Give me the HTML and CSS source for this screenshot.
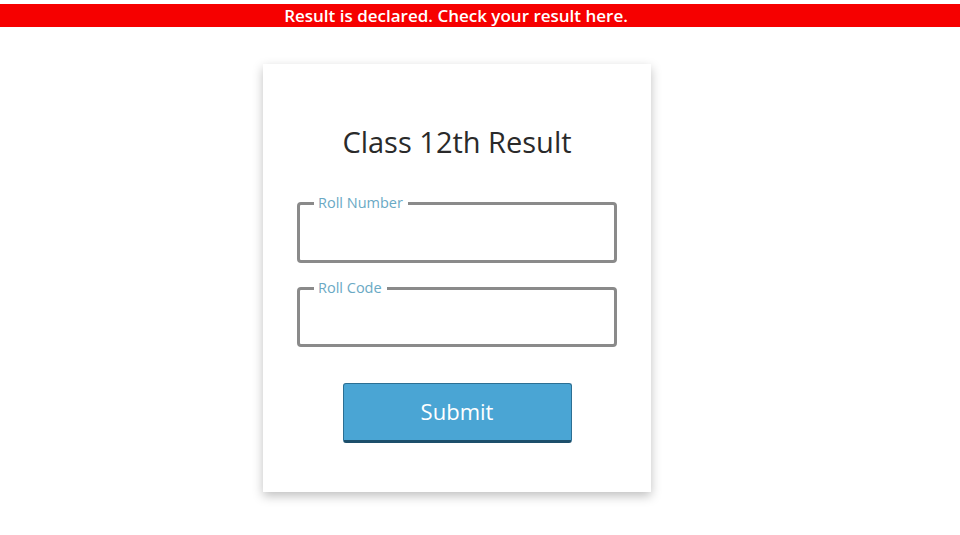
FILE: index.html
```html
<!DOCTYPE html>
<html>
<head>
<meta charset="utf-8">
<link rel="stylesheet" href="styles.css">
</head>
<body>
<div class="banner">Result is declared. Check your result here.</div>
<div class="card">
  <h1 class="title">Class 12th Result</h1>
  <fieldset class="field">
    <legend class="legend">Roll Number</legend>
    <input class="input" type="text">
  </fieldset>
  <fieldset class="field field2">
    <legend class="legend">Roll Code</legend>
    <input class="input" type="text">
  </fieldset>
  <button class="submit">Submit</button>
</div>
</body>
</html>
```
FILE: styles.css
```css
html, body { margin: 0; padding: 0; background: #fff; }
body { font-family: "Open Sans", "Noto Sans", sans-serif; padding: 4px 0 40px 0; min-height: 535px; box-sizing: border-box; }
.banner {
  background: #f60000;
  color: #fff;
  height: 23px;
  line-height: 23px;
  font-size: 17px;
  font-weight: 600;
  text-align: center;
  padding-right: 48px;
  letter-spacing: 0;
}
.card {
  width: 388px;
  height: 428px;
  margin: 37px 0 0 263px;
  box-sizing: border-box;
  background: #fff;
  box-shadow: 0 4px 10px rgba(0,0,0,0.25);
  padding: 56px 34px 0 34px;
  display: flex;
  flex-direction: column;
  align-items: center;
}
.title {
  margin: 0;
  font-size: 29px;
  font-weight: 400;
  color: #2a2a2a;
  line-height: 44px;
}
.field {
  width: 320px;
  height: 68px;
  box-sizing: border-box;
  border: 3px solid #8a8a8a;
  border-radius: 4px;
  margin: 31px 0 0 0;
  padding: 0 10px;
}
.field2 { margin-top: 17px; height: 67px; }
.legend {
  color: #6aa9c4;
  font-size: 14.5px;
  padding: 0 5px 0 4px;
  margin-left: 4px;
  line-height: 16px;
}
.input {
  border: none;
  outline: none;
  width: 100%;
  height: 30px;
  background: transparent;
}
.submit {
  margin-top: 36px;
  width: 229px;
  height: 60px;
  background: #4aa5d4;
  border: 1px solid #2c6f93;
  border-bottom: 3px solid #1d4f6b;
  border-radius: 3px;
  color: #fff;
  font-family: "Open Sans", sans-serif;
  font-size: 22px;
  padding: 0 0 2px 0;
}
```
